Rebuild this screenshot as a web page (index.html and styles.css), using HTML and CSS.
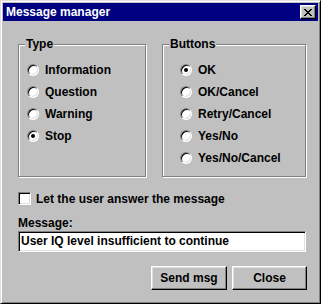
FILE: index.html
```html
<!DOCTYPE html>
<html>
<head>
<meta charset="utf-8">
<link rel="stylesheet" href="styles.css">
</head>
<body>
<div class="window">
  <div class="titlebar">
    <span class="title">Message manager</span>
    <span class="close-btn">
      <svg width="8" height="7" viewBox="0 0 8 7" shape-rendering="crispEdges">
        <path d="M0 0h2v1H0zM6 0h2v1H6zM1 1h2v1H1zM5 1h2v1H5zM2 2h4v1H2zM3 3h2v1H3zM2 4h4v1H2zM1 5h2v1H1zM5 5h2v1H5zM0 6h2v1H0zM6 6h2v1H6z" fill="#000"/>
      </svg>
    </span>
  </div>
  <div class="content">
    <div class="groups">
      <fieldset class="group group-type">
        <legend>Type</legend>
        <div class="opt"><span class="radio"></span>Information</div>
        <div class="opt"><span class="radio"></span>Question</div>
        <div class="opt"><span class="radio"></span>Warning</div>
        <div class="opt"><span class="radio on"></span>Stop</div>
      </fieldset>
      <fieldset class="group group-buttons">
        <legend>Buttons</legend>
        <div class="opt"><span class="radio on"></span>OK</div>
        <div class="opt"><span class="radio"></span>OK/Cancel</div>
        <div class="opt"><span class="radio"></span>Retry/Cancel</div>
        <div class="opt"><span class="radio"></span>Yes/No</div>
        <div class="opt"><span class="radio"></span>Yes/No/Cancel</div>
      </fieldset>
    </div>
    <div class="check-row"><span class="checkbox"></span>Let the user answer the message</div>
    <div class="msg-label">Message:</div>
    <div class="input">User IQ level insufficient to continue</div>
    <div class="actions">
      <span class="btn btn-send">Send msg</span>
      <span class="btn btn-close">Close</span>
    </div>
  </div>
</div>
</body>
</html>
```

FILE: styles.css
```css
html, body {
  margin: 0;
  padding: 0;
  background: #c0c0c0;
}
body {
  font-family: "Liberation Sans", Arial, sans-serif;
  font-weight: bold;
  font-size: 12px;
  color: #000;
}
.window {
  width: 321px;
  height: 304px;
  box-sizing: border-box;
  background: #c0c0c0;
  border: 1px solid;
  border-color: #dfdfdf #000 #000 #dfdfdf;
  box-shadow: inset 1px 1px 0 #fff, inset -1px -1px 0 #808080;
  padding: 2px;
  display: flex;
  flex-direction: column;
}
.titlebar {
  height: 18px;
  background: #000080;
  display: flex;
  align-items: center;
  justify-content: space-between;
  padding: 0 2px 0 3px;
}
.title {
  color: #fff;
  font-size: 12px;
  line-height: 18px;
}
.close-btn {
  width: 16px;
  height: 14px;
  box-sizing: border-box;
  background: #c0c0c0;
  border: 1px solid;
  border-color: #fff #000 #000 #fff;
  box-shadow: inset -1px -1px 0 #808080, inset 1px 1px 0 #dfdfdf;
  display: flex;
  align-items: center;
  justify-content: center;
}
.close-btn svg { display: block; }
.content {
  padding: 16px 0 0 15px;
  display: flex;
  flex-direction: column;
}
.groups {
  display: flex;
  gap: 16px;
  height: 140px;
}
.group {
  margin: 0;
  padding: 8px 0 0 0;
  border: 1px solid #808080;
  box-shadow: inset 1px 1px 0 #fff, 1px 1px 0 #fff;
  box-sizing: border-box;
  height: 140px;
  display: flex;
  flex-direction: column;
  min-width: 0;
}
.group legend {
  padding: 0 1px;
  margin-left: 6px;
  line-height: 14px;
  background: #c0c0c0;
}
.group-type {
  width: 128px;
}
.group-type .opt {
  margin-left: 8px;
}
.group-buttons {
  width: 144px;
}
.group-buttons .opt {
  margin-left: 17px;
}
.opt {
  height: 22px;
  display: flex;
  align-items: center;
  gap: 6px;
}
.radio {
  width: 12px;
  height: 12px;
  box-sizing: border-box;
  border-radius: 50%;
  background: #fff;
  border: 1px solid;
  border-color: #808080 #fff #fff #808080;
  box-shadow: inset 1px 1px 0 #000, inset -1px -1px 0 #dfdfdf;
  display: flex;
  align-items: center;
  justify-content: center;
  flex: none;
}
.radio.on::after {
  content: "";
  width: 4px;
  height: 4px;
  border-radius: 50%;
  background: #000;
}
.check-row {
  margin-top: 15px;
  height: 13px;
  display: flex;
  align-items: center;
  gap: 5px;
}
.checkbox {
  width: 13px;
  height: 13px;
  box-sizing: border-box;
  background: #fff;
  border: 1px solid;
  border-color: #808080 #fff #fff #808080;
  box-shadow: inset 1px 1px 0 #000, inset -1px -1px 0 #dfdfdf;
  flex: none;
}
.msg-label {
  margin-top: 11px;
  line-height: 14px;
}
.input {
  margin-top: 1px;
  width: 288px;
  height: 21px;
  box-sizing: border-box;
  background: #fff;
  border: 1px solid;
  border-color: #808080 #fff #fff #808080;
  box-shadow: inset 1px 1px 0 #000, inset -1px -1px 0 #dfdfdf;
  padding: 0 0 0 2px;
  line-height: 19px;
}
.actions {
  margin-top: 14px;
  width: 289px;
  display: flex;
  justify-content: flex-end;
  gap: 5px;
}
.btn {
  width: 76px;
  height: 24px;
  box-sizing: border-box;
  background: #c0c0c0;
  border: 1px solid;
  border-color: #fff #000 #000 #fff;
  box-shadow: inset -1px -1px 0 #808080, inset 1px 1px 0 #dfdfdf;
  display: flex;
  align-items: center;
  justify-content: center;
}
.btn-close { width: 75px; }
```
